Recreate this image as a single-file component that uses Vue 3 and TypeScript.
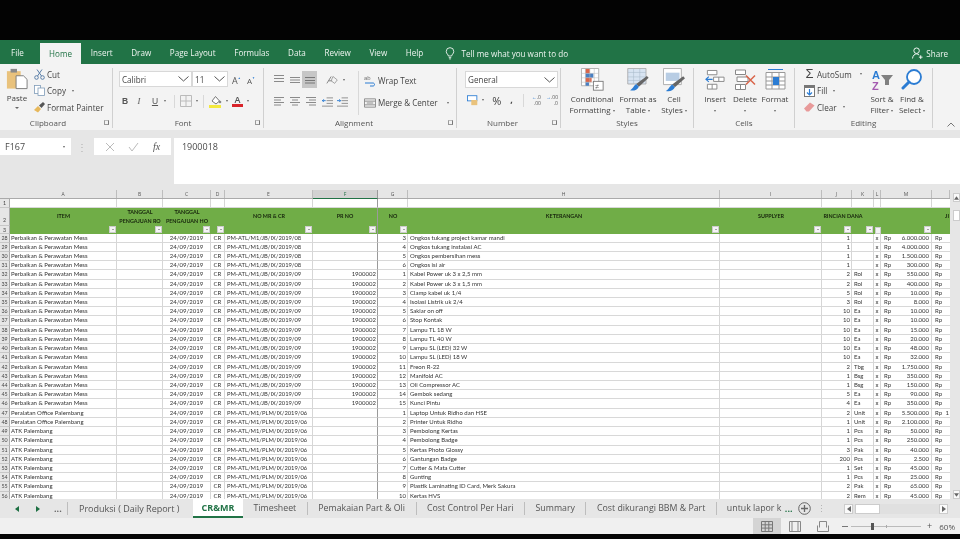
<script setup lang="ts">
interface Row { n: number; item: string; mr: string; pr: string; no: number; ket: string; qty: number; unit: string; price: string }

const JB8 = 'PM-ATL/M1/JB/IX/2019/08'
const JB9 = 'PM-ATL/M1/JB/IX/2019/09'
const PLM = 'PM-ATL/M1/PLM/IX/2019/06'
const MESS = 'Perbaikan & Perawatan Mess'
const OFF = 'Peralatan Office Palembang'
const ATK = 'ATK Palembang'
const PR = '1900002'

const raw: [string, string, string, number, string, number, string, string][] = [
  [MESS, JB8, '', 3, 'Ongkos tukang project kamar mandi', 1, '', '6.000.000'],
  [MESS, JB8, '', 4, 'Ongkos tukang instalasi AC', 1, '', '4.000.000'],
  [MESS, JB8, '', 5, 'Ongkos pembersihan mess', 1, '', '1.500.000'],
  [MESS, JB8, '', 6, 'Ongkos isi air', 1, '', '300.000'],
  [MESS, JB9, PR, 1, 'Kabel Power uk 3 x 2,5 mm', 2, 'Rol', '550.000'],
  [MESS, JB9, PR, 2, 'Kabel Power uk 3 x 1,5 mm', 2, 'Rol', '400.000'],
  [MESS, JB9, PR, 3, 'Clamp kabel uk 1/4', 5, 'Rol', '10.000'],
  [MESS, JB9, PR, 4, 'Isolasi Listrik uk 2/4', 3, 'Rol', '8.000'],
  [MESS, JB9, PR, 5, 'Saklar on off', 10, 'Ea', '10.000'],
  [MESS, JB9, PR, 6, 'Stop Kontak', 10, 'Ea', '10.000'],
  [MESS, JB9, PR, 7, 'Lampu TL 18 W', 10, 'Ea', '15.000'],
  [MESS, JB9, PR, 8, 'Lampu TL 40 W', 10, 'Ea', '20.000'],
  [MESS, JB9, PR, 9, 'Lampu SL (LED) 32 W', 10, 'Ea', '48.000'],
  [MESS, JB9, PR, 10, 'Lampu SL (LED) 18 W', 10, 'Ea', '32.000'],
  [MESS, JB9, PR, 11, 'Freon R-22', 2, 'Tbg', '1.750.000'],
  [MESS, JB9, PR, 12, 'Manifold AC', 1, 'Bsg', '350.000'],
  [MESS, JB9, PR, 13, 'Oli Compressor AC', 1, 'Bsg', '150.000'],
  [MESS, JB9, PR, 14, 'Gembok sedang', 5, 'Ea', '90.000'],
  [MESS, JB9, PR, 15, 'Kunci Pintu', 4, 'Ea', '350.000'],
  [OFF, PLM, '', 1, 'Laptop Untuk Ridho dan HSE', 2, 'Unit', '5.500.000'],
  [OFF, PLM, '', 2, 'Printer Untuk Ridho', 1, 'Unit', '2.100.000'],
  [ATK, PLM, '', 3, 'Pembolong Kertas', 1, 'Pcs', '50.000'],
  [ATK, PLM, '', 4, 'Pembolong Badge', 1, 'Pcs', '250.000'],
  [ATK, PLM, '', 5, 'Kertas Photo Glossy', 3, 'Pak', '40.000'],
  [ATK, PLM, '', 6, 'Gantungan Badge', 200, 'Pcs', '2.500'],
  [ATK, PLM, '', 7, 'Cutter & Mata Cutter', 1, 'Set', '45.000'],
  [ATK, PLM, '', 8, 'Gunting', 1, 'Pcs', '25.000'],
  [ATK, PLM, '', 9, 'Plastik Laminating ID Card, Merk Sakura', 2, 'Pak', '65.000'],
  [ATK, PLM, '', 10, 'Kertas HVS', 2, 'Rem', '45.000'],
]
const rows: Row[] = raw.map((r, i) => ({ n: 28 + i, item: r[0], mr: r[1], pr: r[2], no: r[3], ket: r[4], qty: r[5], unit: r[6], price: r[7] }))
const colLetters = ['A', 'B', 'C', 'D', 'E', 'F', 'G', 'H', 'I', 'J', 'K', 'L', 'M', '']
const menu = ['Insert', 'Draw', 'Page Layout', 'Formulas', 'Data', 'Review', 'View', 'Help']
const sheetsAfter = ['Timesheet', 'Pemakaian Part & Oli', 'Cost Control Per Hari', 'Summary', 'Cost dikurangi BBM & Part']
</script>

<template>
  <div class="screen">
    <div class="black-top"></div>
    <header class="menubar">
      <span class="menu file">File</span>
      <span class="menu home">Home</span>
      <span v-for="m in menu" :key="m" class="menu">{{ m }}</span>
      <svg class="bulb" width="10" height="13" viewBox="0 0 12 15" fill="none" stroke="#fff" stroke-width="1"><path d="M4 10.500C4 8.500 1.500 8 1.500 5A4.500 4.500 0 0 1 10.500 5C10.500 8 8 8.500 8 10.500ZM4.500 12.500H7.500M5 14H7"/></svg>
      <span class="tell">Tell me what you want to do</span>
      <span class="share">
        <svg width="11" height="12" viewBox="0 0 12 13" fill="none" stroke="#fff" stroke-width="1"><circle cx="5" cy="4" r="3"/><path d="M.5 12.500C1 9 3 7.500 5 7.500C6 7.500 7 8 7.800 8.800M9.500 9V13M7.500 11H11.500"/></svg>
        Share
      </span>
    </header>

    <section class="ribbon">
      <div class="group clipboard">
        <div class="body cb-body">
          <div class="paste">
            <svg width="22" height="23" viewBox="0 0 24 24"><rect x="1" y="4" width="15" height="19" fill="#e9c27c"/><rect x="5" y="1.500" width="7" height="4" fill="#8a8a8a"/><path d="M11 9H19L23 13V23H11Z" fill="#fff" stroke="#777"/></svg>
            <span>Paste</span><i class="caret"></i>
          </div>
          <div class="cb-list">
            <div class="cb-item">
              <svg width="11" height="11" viewBox="0 0 11 11" fill="none" stroke="#5b7fa8" stroke-width="1"><circle cx="2.500" cy="8.500" r="1.800"/><circle cx="8.500" cy="8.500" r="1.800"/><path d="M3.500 7L8 .5M7.500 7L3 .5"/></svg>
              Cut
            </div>
            <div class="cb-item">
              <svg width="11" height="11" viewBox="0 0 11 11" fill="#fff" stroke="#7f9cb8" stroke-width=".8"><rect x=".5" y=".5" width="6" height="8"/><rect x="4" y="3" width="6.500" height="7.500"/></svg>
              Copy <i class="caret sm"></i>
            </div>
            <div class="cb-item">
              <svg width="11" height="11" viewBox="0 0 11 11"><path d="M0 8L4 4L7 7L4 10.500Z" fill="#e7b85b"/><path d="M5 3.500L9 0L11 2L7.500 6Z" fill="#555"/></svg>
              Format Painter
            </div>
          </div>
        </div>
        <div class="label lz">Clipboard<b class="launcher"></b></div>
      </div>

      <div class="group font">
        <div class="body col">
          <div class="line">
            <span class="combo w-font">Calibri<svg class="chev" width="11" height="6" viewBox="0 0 11 6" fill="none" stroke="#555"><path d="M.5.5L5.500 5L10.500.5"/></svg></span>
            <span class="combo w-size">11<svg class="chev" width="11" height="6" viewBox="0 0 11 6" fill="none" stroke="#555"><path d="M.5.5L5.500 5L10.500.5"/></svg></span>
            <span class="grow-a">A<sup>▲</sup></span><span class="grow-a small">A<sup>▼</sup></span>
          </div>
          <div class="line fmt">
            <b class="fb">B</b><i class="fi">I</i><u class="fu">U</u><i class="caret sm after-u"></i>
            <span class="vsep"></span>
            <svg width="12" height="12" viewBox="0 0 12 12" fill="none" stroke="#bbb"><path d="M.5.5H11.500V11.500H.5ZM6 .5V11.500M.5 6H11.500"/></svg><i class="caret sm"></i>
            <span class="vsep"></span>
            <svg width="13" height="14" viewBox="0 0 13 14"><path d="M3 7L6.500 2.500L10.500 7L7 10Z" fill="#fff" stroke="#777"/><circle cx="11" cy="8" r="1.300" fill="#888"/><rect y="11" width="12" height="3" fill="#f3e93d"/></svg><i class="caret sm"></i>
            <span class="fcolor">A</span><i class="caret sm"></i>
          </div>
        </div>
        <div class="label lz">Font<b class="launcher"></b></div>
      </div>

      <div class="group align">
        <div class="body al-body">
          <div class="al-icons">
            <div class="line">
              <svg class="ic" width="12" height="9" viewBox="0 0 12 9" stroke="#8a8a8a"><path d="M1 .5H11M1 3.500H11M1 6.500H11"/></svg>
              <svg class="ic" width="12" height="9" viewBox="0 0 12 9" stroke="#8a8a8a"><path d="M1 2.500H11M1 5H11M1 7.500H11"/></svg>
              <span class="pressed"><svg width="12" height="9" viewBox="0 0 12 9" stroke="#777"><path d="M1 2.500H11M1 5.500H11M1 8H11"/></svg></span>
              <svg class="orient" width="13" height="11" viewBox="0 0 15 11" fill="none" stroke="#777"><path d="M1 10L6 2M3 7H7"/><path d="M8 2L13 6L10 10L6 7Z" stroke="#999"/></svg>
              <i class="caret sm"></i>
            </div>
            <div class="line">
              <svg class="ic" width="12" height="9" viewBox="0 0 12 9" stroke="#8a8a8a"><path d="M1 .5H11M1 3H8M1 5.500H11M1 8H8"/></svg>
              <svg class="ic" width="12" height="9" viewBox="0 0 12 9" stroke="#8a8a8a"><path d="M1 .5H11M3 3H9M1 5.500H11M3 8H9"/></svg>
              <svg class="ic" width="12" height="9" viewBox="0 0 12 9" stroke="#8a8a8a"><path d="M1 .5H11M4 3H11M1 5.500H11M4 8H11"/></svg>
              <svg class="indent" width="11" height="10" viewBox="0 0 12 10" stroke="#8a8a8a" fill="none"><path d="M5 .5H12M5 3.500H12M5 6.500H12M0 9.500H12"/><path d="M4 3.500H0M2 2L.5 3.500L2 5" stroke="#2b7cd3"/></svg>
              <svg width="11" height="10" viewBox="0 0 12 10" stroke="#8a8a8a" fill="none"><path d="M5 .5H12M5 3.500H12M5 6.500H12M0 9.500H12"/><path d="M0 3.500H4M2.500 2L4 3.500L2.500 5" stroke="#2b7cd3"/></svg>
            </div>
          </div>
          <span class="vsep full"></span>
          <div class="al-cmds">
            <div class="cb-item">
              <svg width="12" height="13" viewBox="0 0 12 13" fill="none" stroke="#777"><text x="0" y="6" font-size="6" fill="#777" stroke="none" font-family="Liberation Sans">ab</text><path d="M1 9H9C11 9 11 12 9 12H6" stroke="#2b7cd3"/></svg>
              Wrap Text
            </div>
            <div class="cb-item">
              <svg width="12" height="12" viewBox="0 0 13 12" fill="none" stroke="#888"><path d="M.5 1.500H12.500V10.500H.5ZM.5 4H12.500M.5 8H12.500M3 6H10"/></svg>
              Merge &amp; Center <i class="caret sm mc"></i>
            </div>
          </div>
        </div>
        <div class="label lz">Alignment<b class="launcher"></b></div>
      </div>

      <div class="group number">
        <div class="body col num-body">
          <span class="combo w-num">General<svg class="chev" width="11" height="6" viewBox="0 0 11 6" fill="none" stroke="#555"><path d="M.5.5L5.500 5L10.500.5"/></svg></span>
          <div class="line num-line">
            <svg width="13" height="12" viewBox="0 0 13 12"><rect x=".5" y="1" width="11" height="6" fill="#fff" stroke="#2b7cd3"/><rect x="5" y="6" width="7" height="6" fill="#e9c27c"/></svg><i class="caret sm"></i>
            <span class="pct">%</span><span class="comma">,</span>
            <span class="vsep"></span>
            <span class="deci"><em>←</em>.0<br>.00</span>
            <span class="deci"><em>→</em>.00<br>.0</span>
          </div>
        </div>
        <div class="label lz">Number<b class="launcher"></b></div>
      </div>

      <div class="group styles">
        <div class="body big-row">
          <div class="big w47">
            <svg width="23" height="24" viewBox="0 0 26 27"><path d="M.5.5H20V20H.5Z" fill="#fff" stroke="#aaa"/><path d="M5 1H10V6H5Z" fill="#d9654a"/><path d="M5 6H14V11H5Z" fill="#4a7fc1"/><path d="M5 11H12V16H5Z" fill="#d9654a"/><path d="M5 16H9V20H5Z" fill="#4a7fc1"/><path d="M.5 6H20M.5 11H20M.5 16H20M5 1V20M10 1V20M15 1V20" stroke="#bbb" stroke-width=".6"/><rect x="14" y="15" width="11" height="10" fill="#fff" stroke="#777"/><text x="16" y="23.500" font-size="8" fill="#666" font-family="Liberation Sans">≠</text></svg>
            <span>Conditional<br>Formatting <i class="caret sm"></i></span>
          </div>
          <div class="big w42">
            <svg width="22" height="24" viewBox="0 0 24 27"><path d="M.5.5H21V18H.5Z" fill="#d8e4f2" stroke="#aaa"/><path d="M.5 5H21M.5 10H21M.5 14H21M7 .5V18M14 .5V18" stroke="#a9b9cb" stroke-width=".6"/><path d="M22 9L24 11L13 21L10 18Z" fill="#666"/><path d="M10 18L13 21C11 25 7 26 3 25C6 24 7 20 10 18Z" fill="#2b7cd3"/></svg>
            <span>Format as<br>Table <i class="caret sm"></i></span>
          </div>
          <div class="big w32">
            <svg width="22" height="24" viewBox="0 0 24 26"><path d="M.5.5H20V18H.5Z" fill="#fff" stroke="#aaa"/><path d="M3 5H18V14H3Z" fill="#b8cde4"/><path d="M22 9L24 11L13 21L10 18Z" fill="#666"/><path d="M10 18L13 21C11 25 7 26 3 25C6 24 7 20 10 18Z" fill="#2b7cd3"/></svg>
            <span>Cell<br>Styles <i class="caret sm"></i></span>
          </div>
        </div>
        <div class="label">Styles</div>
      </div>

      <div class="group cells">
        <div class="body big-row">
          <div class="big w30">
            <svg width="20" height="24" viewBox="0 0 21 21" fill="#fff" stroke="#888"><path d="M2.500.5H12.500V5H2.500ZM2.500 15H12.500V20H2.500ZM7.500 15V20M9 7.500H20V12H9ZM14.500 7.500V12" /><path d="M8 9.800H1M4 7L1 9.800L4 12.500" fill="none" stroke="#2b7cd3" stroke-width="1.200"/></svg>
            <span>Insert<br><i class="caret sm"></i></span>
          </div>
          <div class="big w30">
            <svg width="23" height="24" viewBox="0 0 23 21" fill="#fff" stroke="#888"><path d="M1.500.5H11.500V5H1.500ZM1.500 15H11.500V20H1.500ZM6.500 15V20M3 7.500H14V12H3Z"/><path d="M12 6L21 15M21 6L12 15" stroke="#d9654a" stroke-width="1.500"/></svg>
            <span>Delete<br><i class="caret sm"></i></span>
          </div>
          <div class="big w30">
            <svg width="21" height="24" viewBox="0 0 21 24" fill="#fff" stroke="#999"><path d="M1 4.500H20V21H1ZM1 9H20M1 13H20M1 17H20M7 4.500V21M14 4.500V21"/><rect x="8" y="9" width="6" height="8" fill="#2b7cd3" stroke="none"/><path d="M3 1.500H18" stroke="#2b7cd3"/></svg>
            <span>Format<br><i class="caret sm"></i></span>
          </div>
        </div>
        <div class="label">Cells</div>
      </div>

      <div class="group editing">
        <div class="body ed-body">
          <div class="cb-list ed-list">
            <div class="cb-item"><span class="sigma">Σ</span> AutoSum <i class="caret sm as"></i></div>
            <div class="cb-item">
              <svg width="11" height="12" viewBox="0 0 11 12"><rect x=".5" y=".5" width="10" height="11" fill="#fff" stroke="#777"/><rect x="1" y="1" width="9" height="2" fill="#777"/><path d="M5.500 4V10M3 7.500L5.500 10L8 7.500" fill="none" stroke="#2b7cd3" stroke-width="1.200"/></svg>
              Fill <i class="caret sm"></i>
            </div>
            <div class="cb-item">
              <svg width="11" height="10" viewBox="0 0 11 10"><path d="M0 6.500L6 .5L10.500 3.500L5 9.500H2.500Z" fill="#e89a9a"/></svg>
              Clear <i class="caret sm"></i>
            </div>
          </div>
          <div class="big w31">
            <svg width="22" height="24" viewBox="0 0 22 24"><text x="1" y="11" font-size="11" font-weight="700" fill="#2b7cd3" font-family="Liberation Sans">A</text><text x="1" y="22" font-size="11" font-weight="700" fill="#a45ab0" font-family="Liberation Sans">Z</text><path d="M10 7H22L18 12V17H14V12Z" fill="#808080"/></svg>
            <span>Sort &amp;<br>Filter <i class="caret sm"></i></span>
          </div>
          <div class="big w31">
            <svg width="22" height="24" viewBox="0 0 22 24" fill="none"><circle cx="13" cy="9" r="7" stroke="#2b7cd3" stroke-width="1.800" fill="#fff"/><path d="M8 14L2 20" stroke="#2b7cd3" stroke-width="3" stroke-linecap="round"/></svg>
            <span>Find &amp;<br>Select <i class="caret sm"></i></span>
          </div>
        </div>
        <div class="label">Editing</div>
      </div>
      <div class="collapse">
        <svg width="8" height="5" viewBox="0 0 8 5" fill="none" stroke="#777"><path d="M.5 4.500L4 1L7.500 4.500"/></svg>
      </div>
    </section>

    <section class="formula">
      <div class="namebox">F167<i class="caret sm nb"></i></div>
      <span class="dots">⋮</span>
      <div class="fx-box">
        <svg width="10" height="10" viewBox="0 0 10 10" stroke="#bbb" fill="none"><path d="M1 1L9 9M9 1L1 9"/></svg>
        <svg width="11" height="10" viewBox="0 0 11 10" stroke="#bbb" fill="none"><path d="M1 5L4 9L10 1"/></svg>
        <span class="fx">fx</span>
      </div>
      <div class="f-input">1900018</div>
    </section>

    <section class="sheet">
      <div class="sheet-main">
        <div class="colheads">
          <div class="corner"></div>
          <div v-for="(c, i) in colLetters" :key="i" class="ch" :class="['c' + i, { active: c === 'F' }]">{{ c }}</div>
        </div>
        <div class="row r1">
          <div class="rh">1</div>
          <div v-for="(c, i) in colLetters" :key="i" class="cell" :class="'c' + i"></div>
        </div>
        <div class="head-rows">
          <div class="rh-stack"><span class="rh h2">2</span><span class="rh h3">3</span></div>
          <div class="hc c0"><b>ITEM</b><i class="fbtn"></i></div>
          <div class="hc c1"><b>TANGGAL<br>PENGAJUAN RO</b><i class="fbtn"></i></div>
          <div class="hc c2"><b>TANGGAL<br>PENGAJUAN HO</b><i class="fbtn"></i></div>
          <div class="hc c3"><b></b><i class="fbtn"></i></div>
          <div class="hc c4"><b>NO MR &amp; CR</b><i class="fbtn"></i></div>
          <div class="hc c5"><b>PR NO</b><i class="fbtn"></i></div>
          <div class="hc c6"><b>NO</b><i class="fbtn"></i></div>
          <div class="hc c7"><b>KETERANGAN</b><i class="fbtn"></i></div>
          <div class="hc c8"><b>SUPPLYER</b><i class="fbtn"></i></div>
          <div class="hc c9 ovf"><b>RINCIAN DANA</b><i class="fbtn"></i></div>
          <div class="hc c10"><b></b><i class="fbtn"></i></div>
          <div class="hc c11"><b></b><i class="fbtn"></i></div>
          <div class="hc c12"><b></b><i class="fbtn"></i></div>
          <div class="hc c13"><b class="jcut">JI</b></div>
        </div>
        <div class="body-rows">
          <div v-for="r in rows" :key="r.n" class="row">
            <div class="rh">{{ r.n }}</div>
            <div class="cell c0">{{ r.item }}</div>
            <div class="cell c1"></div>
            <div class="cell c2 center">24/09/2019</div>
            <div class="cell c3 center">CR</div>
            <div class="cell c4">{{ r.mr }}</div>
            <div class="cell c5 right">{{ r.pr }}</div>
            <div class="cell c6 right">{{ r.no }}</div>
            <div class="cell c7">{{ r.ket }}</div>
            <div class="cell c8"></div>
            <div class="cell c9 right">{{ r.qty }}</div>
            <div class="cell c10">{{ r.unit }}</div>
            <div class="cell c11 center">x</div>
            <div class="cell c12 split"><span>Rp</span><span>{{ r.price }}</span></div>
            <div class="cell c13 split"><span>Rp</span><span>{{ r.n === 47 ? '1' : '' }}</span></div>
          </div>
        </div>
      </div>
      <div class="vscroll">
        <span class="sbtn"><svg width="6" height="4" viewBox="0 0 6 4" fill="#666"><path d="M0 4L3 0L6 4Z"/></svg></span>
        <span class="thumb"></span>
        <span class="track"></span>
        <span class="sbtn"><svg width="6" height="4" viewBox="0 0 6 4" fill="#666"><path d="M0 0L3 4L6 0Z"/></svg></span>
      </div>
    </section>

    <section class="tabs">
      <div class="tab-nav">
        <svg width="4" height="6" viewBox="0 0 4 6" fill="#1d6f42"><path d="M4 0L0 3L4 6Z"/></svg>
        <svg width="4" height="6" viewBox="0 0 4 6" fill="#1d6f42"><path d="M0 0L4 3L0 6Z"/></svg>
        <span class="more">...</span>
      </div>
      <span class="tab first">Produksi ( Daily Report )</span>
      <span class="tab active">CR&amp;MR</span>
      <span v-for="s in sheetsAfter" :key="s" class="tab">{{ s }}</span>
      <span class="tab last">untuk lapor k</span>
      <span class="more green">...</span>
      <span class="addsheet">
        <svg width="13" height="13" viewBox="0 0 13 13" fill="none" stroke="#666"><circle cx="6.500" cy="6.500" r="5.800"/><path d="M6.500 3V10M3 6.500H10" stroke-width="1.300"/></svg>
      </span>
      <span class="dots small">⋮</span>
      <div class="hscroll">
        <span class="hbtn"><svg width="4" height="6" viewBox="0 0 4 6" fill="#666"><path d="M4 0L0 3L4 6Z"/></svg></span>
        <span class="hthumb"></span>
        <span class="htrack"></span>
        <span class="hbtn"><svg width="4" height="6" viewBox="0 0 4 6" fill="#666"><path d="M0 0L4 3L0 6Z"/></svg></span>
      </div>
    </section>

    <footer class="status">
      <span class="view on"><svg width="12" height="11" viewBox="0 0 12 11" fill="none" stroke="#777"><path d="M.5.500H11.500V10.500H.5ZM.5 3.800H11.500M.5 7.100H11.500M4.200.5V10.500M7.800.5V10.500"/></svg></span>
      <span class="view"><svg width="12" height="11" viewBox="0 0 12 11" fill="none" stroke="#888"><path d="M.5.500H11.500V10.500H.5ZM3 .5V10.500M9 .5V10.500"/></svg></span>
      <span class="view"><svg width="12" height="11" viewBox="0 0 12 11" fill="none" stroke="#888"><path d="M.5 4.500V10.500H11.500V4.500M2.500 6.500V.5H9.500V6.500"/></svg></span>
      <span class="minus"></span>
      <span class="zoomtrack"><i class="knob"></i><i class="tick"></i></span>
      <span class="plus">+</span>
      <span class="zoomval">60%</span>
    </footer>
    <div class="black-bottom"></div>
  </div>
</template>

<style>
html, body { margin: 0; background: #000; overflow: hidden; }
</style>

<style scoped>
.screen {
  width: 960px; height: 539px; display: flex; flex-direction: column; overflow: hidden;
  font-family: "Open Sans", "Liberation Sans", sans-serif; background: #000; color: #444;
  filter: blur(0.4px);
}
.black-top { height: 40px; flex: none; background: #030303; }
.black-bottom { flex: 1; background: #050505; }

.menubar { height: 24px; flex: none; background: #217346; display: flex; align-items: center; color: #eef5f0; font-size: 8.100px; padding-top: 2px; box-sizing: border-box; }
.menu { padding: 0 9.300px; line-height: 22px; white-space: nowrap; }
.menu.file { padding: 0 0 0 11px; width: 40px; box-sizing: border-box; flex: none; }
.menu.home { background: #f3f3f3; color: #217346; width: 41px; box-sizing: border-box; padding: 0; text-align: center; margin-right: .5px; height: 21px; line-height: 21px; align-self: flex-end; flex: none; }
.bulb { margin-left: 12px; flex: none; }
.tell { margin-left: 7px; }
.share { margin-left: auto; margin-right: 12px; display: flex; align-items: center; gap: 3px; }

.ribbon { height: 66px; flex: none; background: #f3f3f3; display: flex; padding-top: 4px; box-sizing: border-box; font-size: 8.100px; color: #444; }
.group { display: flex; flex-direction: column; border-right: 1px solid #d0d0d0; box-sizing: border-box; height: 60px; padding: 0 2px; }
.clipboard { width: 113px; } .font { width: 151px; } .align { width: 193px; } .number { width: 104px; }
.styles { width: 133px; } .cells { width: 101px; } .editing { width: 138px; }
.body { flex: 1; min-height: 0; display: flex; }
.col { flex-direction: column; }
.label { height: 11px; line-height: 12px; font-size: 8px; text-align: center; position: relative; color: #555; flex: none; }
.label.lz { padding-right: 12px; }
.font .label.lz { padding-right: 10px; }
.clipboard .label.lz { padding-right: 16px; }
.launcher { position: absolute; right: 1px; top: 3px; width: 5px; height: 5px; border: 1px solid #999; border-top-color: #bbb; border-right-color: #777; box-sizing: border-box; }
.caret { display: inline-block; width: 0; height: 0; border: 2px solid transparent; border-top: 2.500px solid #666; border-bottom: 0; vertical-align: middle; flex: none; }
.caret.sm { border-width: 2px 1.500px 0; }

.paste { width: 27px; flex: none; display: flex; flex-direction: column; align-items: center; padding-left: 3px; box-sizing: border-box; font-size: 8px; }
.paste svg { margin-top: -1px; flex: none; }
.paste span { margin-top: 2px; line-height: 11px; }
.paste .caret { margin-top: 4px; }
.cb-list { display: flex; flex-direction: column; margin-left: 5px; margin-top: -2px; }
.cb-item { height: 16.500px; display: flex; align-items: center; gap: 2px; white-space: nowrap; flex: none; }
.cb-item .caret { margin-left: 4px; }

.font .body.col { padding: 3px 3px 0 4px; }
.line { display: flex; align-items: center; }
.combo { background: #fff; border: 1px solid #d8d8d8; box-sizing: border-box; height: 16px; display: flex; align-items: center; justify-content: space-between; padding: 0 2px; font-size: 8.100px; color: #444; flex: none; }
.w-font { width: 73px; }
.w-size { width: 36px; }
.chev { flex: none; }
.grow-a { margin-left: 4px; font-size: 9px; color: #555; width: 11px; line-height: 10px; white-space: nowrap; }
.grow-a.small { margin-left: 4px; font-size: 8px; }
.grow-a sup { font-size: 3px; color: #2b7cd3; vertical-align: 5px; }
.fmt { margin-top: 6px; gap: 4px; height: 16px; padding-left: 1px; }
.fb, .fi, .fu { font-size: 8.500px; width: 10px; color: #555; font-family: "Liberation Sans", sans-serif; text-align: center; flex: none; }
.fi { font-style: italic; font-family: "Liberation Serif", serif; }
.fu { margin-left: 2px; }
.after-u { margin-right: 3px; }
.vsep { width: 1px; height: 13px; background: #d8d8d8; display: inline-block; margin: 0 1px; flex: none; }
.vsep.full { height: 44px; margin: 0 5px; }
.fcolor { font-size: 9px; font-weight: 600; color: #555; border-bottom: 3px solid #d8232a; width: 11px; text-align: center; line-height: 9px; flex: none; }

.al-body { padding-left: 7px; padding-top: 3px; }
.al-icons { display: flex; flex-direction: column; gap: 5px; width: 80px; flex: none; }
.al-icons .line { height: 17px; gap: 4px; }
.ic { flex: none; }
.pressed { width: 15px; height: 17px; background: #c6c6c6; display: flex; align-items: center; justify-content: center; flex: none; margin-left: -3px; }
.orient { margin-left: 5px; flex: none; }
.indent { margin-left: 1px; flex: none; }
.al-icons svg { flex: none; }
.al-cmds { display: flex; flex-direction: column; gap: 6px; padding-top: 1px; }
.mc { margin-left: 7px !important; }

.num-body { padding: 3px 0 0 6px; }
.w-num { width: 93px; height: 17px; }
.num-line { margin-top: 5px; gap: 4px; height: 14px; padding-left: 2px; }
.pct { font-size: 11px; margin-left: 4px; }
.comma { font-weight: 700; font-size: 9px; margin: 0 5px; line-height: 6px; }
.deci { font-size: 5px; line-height: 6px; width: 13px; text-align: right; margin-left: 1px; color: #555; white-space: nowrap; }
.deci em { font-style: normal; color: #2b7cd3; }

.big-row { justify-content: flex-start; gap: 0; padding-left: 4px; }
.big { display: flex; flex-direction: column; align-items: center; text-align: center; font-size: 8px; line-height: 11px; flex: none; }
.big svg { flex: none; margin-bottom: 1px; }
.big span { white-space: nowrap; }
.w47 { width: 50px; } .w42 { width: 42px; } .w32 { width: 30px; } .w30 { width: 30px; } .w31 { width: 30px; }
.ed-body { gap: 0; }
.ed-list { margin-left: 7px; width: 63px; flex: none; }
.sigma { font-size: 13px; font-family: "Liberation Sans", sans-serif; line-height: 12px; color: #444; width: 11px; text-align: center; }
.as { margin-left: 6px !important; }
.collapse { flex: 1; display: flex; align-items: flex-end; justify-content: flex-end; padding: 0 5px 1px 0; height: 60px; box-sizing: border-box; }

.formula { height: 60px; flex: none; background: #e6e6e6; display: flex; align-items: flex-start; padding-top: 8px; box-sizing: border-box; }
.namebox { width: 71px; height: 17px; background: #fff; display: flex; align-items: center; justify-content: space-between; padding: 0 6px 0 5px; box-sizing: border-box; font-size: 9px; color: #4a4a4a; }
.dots { width: 23px; text-align: center; color: #b0b0b0; font-size: 10px; line-height: 18px; flex: none; }
.fx-box { width: 77px; height: 17px; background: #fff; display: flex; align-items: center; justify-content: space-around; padding: 0 4px; box-sizing: border-box; flex: none; }
.fx { font-family: "Liberation Serif", serif; font-style: italic; color: #555; font-size: 10px; }
.f-input { margin-left: 3px; width: 787px; height: 46px; background: #fff; padding: 2px 8px; box-sizing: border-box; font-size: 9px; color: #4a4a4a; line-height: 14px; }

.sheet { height: 309px; flex: none; display: flex; background: #fff; overflow: hidden; }
.sheet-main { width: 950px; flex: none; overflow: hidden; }
.colheads { display: flex; height: 8px; background: #e6e6e6; border-bottom: 1px solid #aaa; }
.corner { width: 10px; flex: none; }
.ch { font-size: 5px; line-height: 8px; text-align: center; color: #555; border-right: 1px solid #bdbdbd; box-sizing: border-box; flex: none; height: 8px; }
.ch.active { background: #d2d2d2; border-bottom: 1.500px solid #217346; color: #217346; height: 9px; }
.c0 { width: 107px; } .c1 { width: 46px; } .c2 { width: 48px; } .c3 { width: 14px; } .c4 { width: 88px; } .c5 { width: 65px; }
.c6 { width: 30px; } .c7 { width: 312px; } .c8 { width: 102px; } .c9 { width: 30px; } .c10 { width: 22px; } .c11 { width: 7px; } .c12 { width: 51px; } .c13 { width: 18px; }

.row { display: flex; height: 9.220px; line-height: 8.500px; color: #333; }
.row.r1 { height: 8.500px; }
.rh { width: 10px; flex: none; background: #e6e6e6; border-right: 1px solid #aaa; border-bottom: 1px solid #c8c8c8; box-sizing: border-box; font-size: 5.300px; text-align: center; color: #444; display: block; font-family: "Lato", sans-serif; }
.cell { flex: none; box-sizing: border-box; border-right: 1px solid #d6d6d6; border-bottom: 1px solid #d8d8d8; padding: 0 1px; white-space: nowrap; overflow: hidden; font-family: "Lato", "Open Sans", sans-serif; font-size: 6px; }
.center { text-align: center; padding: 0; }
.right { text-align: right; }
.split { display: flex; justify-content: space-between; }
.cell.c4 { font-size: 5.800px; padding-left: 2px; }
.cell.c5, .ch.c5, .hc.c5 { border-right: 1.500px solid #9a9a9a; }
.cell.c7 { padding-left: 2px; }
.cell.c10 { padding-left: 2px; }
.cell.c12 { padding-left: 3px; padding-right: 2px; }
.cell.c13 { padding-left: 3px; border-right: 0; }

.head-rows { display: flex; height: 26px; }
.rh-stack { width: 10px; flex: none; display: flex; flex-direction: column; }
.rh.h2 { height: 18px; width: 10px; line-height: 25px; }
.rh.h3 { height: 8px; width: 10px; line-height: 8px; }
.hc { flex: none; box-sizing: border-box; background: #70ad47; position: relative; text-align: center; font-size: 5.400px; line-height: 8px; color: #16240c; padding-top: 4.500px; font-family: "Lato", sans-serif; }
.hc b { font-weight: 700; white-space: nowrap; display: block; }
.hc.c1, .hc.c2 { padding-top: 0; line-height: 9px; }
.hc.ovf { overflow: visible; z-index: 1; }
.hc.ovf b { width: 60px; margin-left: -9px; text-align: center; }
.jcut { text-align: right; padding-right: 1px; }
.fbtn { position: absolute; right: 1px; bottom: 1px; width: 7px; height: 6.500px; background: #f4f4f4; border: 0.500px solid #ccc; box-sizing: border-box; }
.fbtn::after { content: ""; position: absolute; left: 1.700px; top: 2.200px; border: 1.200px solid transparent; border-top: 1.500px solid #555; border-bottom: 0; }
.hc.c11 .fbtn { width: 6px; right: 0; bottom: 0; }
.hc.c11 .fbtn::after { display: none; }
.body-rows { height: 265.500px; overflow: hidden; }

.vscroll { width: 10px; flex: none; background: #e6e6e6; display: flex; flex-direction: column; padding: 3px 0 0 3px; box-sizing: border-box; }
.sbtn { width: 7px; height: 9px; background: #fafafa; border: 0.500px solid #ccc; display: flex; align-items: center; justify-content: center; box-sizing: border-box; flex: none; }
.thumb { width: 7px; height: 11px; background: #fff; border: 0.500px solid #ccc; box-sizing: border-box; margin-top: 8px; flex: none; }
.track { flex: 1; }

.tabs { height: 19px; flex: none; background: #e6e6e6; display: flex; align-items: center; font-size: 8.800px; color: #555; }
.tab-nav { width: 67px; flex: none; display: flex; align-items: center; padding-left: 15px; gap: 17px; box-sizing: border-box; }
.more { font-weight: 700; color: #666; line-height: 10px; margin-left: -3px; font-size: 9px; }
.more.green { color: #217346; margin-left: 2px; }
.tab { padding: 0 10.500px; line-height: 13px; border-right: 1px solid #bdbdbd; white-space: nowrap; height: 13px; flex: none; }
.tab.first { border-left: 1px solid #bdbdbd; width: 126px; box-sizing: border-box; padding: 0 0 0 11px; border-right: 0; font-size: 9px; }
.tab.active { background: #fff; color: #217346; font-weight: 700; height: 19px; line-height: 18px; border-right: 0; border-bottom: 2px solid #217346; box-sizing: border-box; width: 50px; padding: 0; text-align: center; font-size: 9px; }
.tab.last { border-right: 0; padding: 0 0 0 10px; width: 66px; overflow: hidden; box-sizing: border-box; }
.addsheet { margin-left: 5px; display: flex; flex: none; }
.dots.small { width: 21px; font-size: 9px; }
.hscroll { width: 104px; height: 10px; display: flex; background: #e0e0e0; margin-right: 12px; align-items: stretch; margin-left: auto; flex: none; }
.hbtn { width: 9px; background: #fafafa; border: 0.500px solid #ccc; display: flex; align-items: center; justify-content: center; box-sizing: border-box; flex: none; }
.hthumb { width: 25px; background: #fff; border: 0.500px solid #ccc; box-sizing: border-box; margin-left: 2px; }
.htrack { flex: 1; }

.status { height: 16px; flex: none; background: #f0f0f0; display: flex; align-items: stretch; justify-content: flex-end; font-size: 8px; color: #555; }
.view { width: 28px; display: flex; align-items: center; justify-content: center; flex: none; }
.view.on { background: #d4d4d4; }
.minus { width: 6px; height: 1px; background: #777; align-self: center; margin: 0 3px 0 5px; flex: none; }
.zoomtrack { width: 70px; height: 1px; background: #bbb; align-self: center; margin-right: 6px; position: relative; flex: none; }
.knob { position: absolute; left: 20px; top: -3px; width: 3px; height: 7px; background: #555; }
.tick { position: absolute; left: 35px; top: -1px; width: 1px; height: 3px; background: #aaa; }
.plus { align-self: center; font-size: 9px; line-height: 10px; }
.zoomval { align-self: center; margin-right: 5px; margin-left: 7px; }
</style>
